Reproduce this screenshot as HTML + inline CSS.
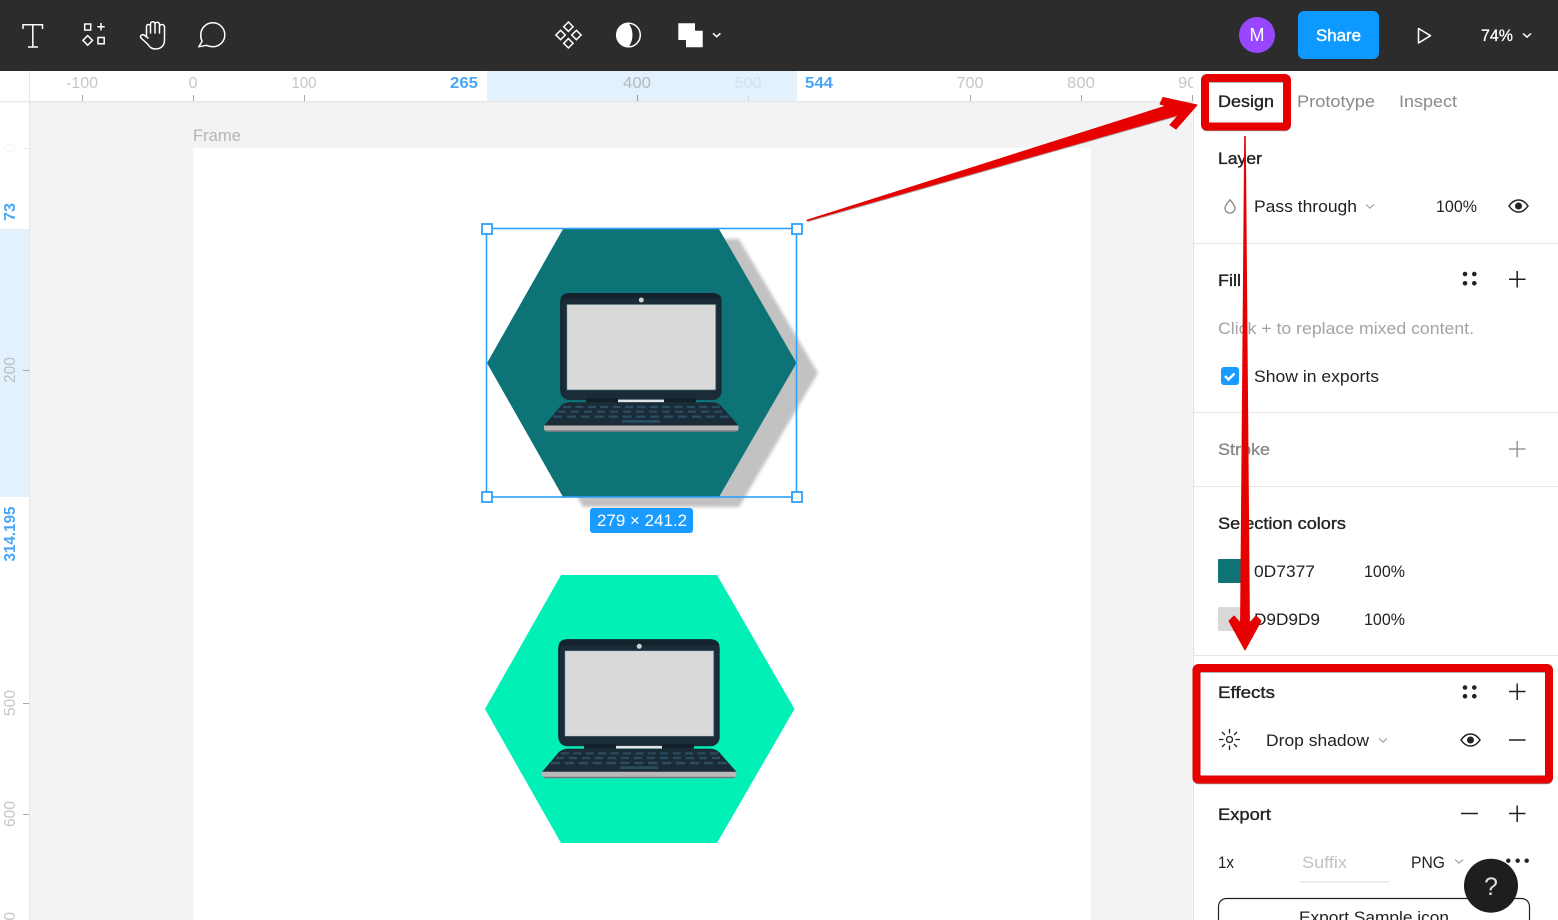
<!DOCTYPE html>
<html>
<head>
<meta charset="utf-8">
<title>Figma drop shadow</title>
<style>
html,body{margin:0;padding:0;background:#fff;width:1558px;height:920px;overflow:hidden}
svg{display:block}
text{font-family:"Liberation Sans",sans-serif;font-size:16.5px;fill:#222}
.m{stroke:#222;stroke-width:.35px}
.g{fill:#8a8a8a}
.r{font-size:15.5px;fill:#c6c6c6;text-anchor:middle}
.b{font-size:15.5px;fill:#4aa6f3;font-weight:bold;text-anchor:middle}
.w{fill:none;stroke:#fff;stroke-width:1.5}
.k{fill:none;stroke:#222;stroke-width:1.5}
</style>
</head>
<body>
<svg width="1558" height="920" viewBox="0 0 1558 920" xmlns="http://www.w3.org/2000/svg">
<defs>
<filter id="bl" x="-10%" y="-10%" width="120%" height="120%"><feGaussianBlur stdDeviation="1.6"/></filter>
<g id="lap">
<rect x="560.3" y="293" width="161.4" height="107" rx="9" fill="#1a2c38"/>
<path d="M560.3 302 Q560.3 293 569.3 293 H712 Q720 293 721.5 299 H566 Q562 299 562 303 V392 L560.3 390Z" fill="#14232d"/>
<rect x="566.8" y="304.4" width="149" height="85.6" fill="#d9d9d9" stroke="#41646f" stroke-width=".7"/>
<circle cx="641.3" cy="300" r="2.5" fill="#cfcfcf"/>
<rect x="586" y="398" width="32" height="4.5" rx="1" fill="#122029"/>
<rect x="664" y="398" width="32" height="4.5" rx="1" fill="#122029"/>
<rect x="618" y="399.6" width="46" height="2.7" fill="#e4e4e4"/>
<path d="M570 402.3 H712 Q719 402.3 723 408 L738.5 425.5 V426 H543.8 L559 408 Q563 402.3 570 402.3Z" fill="#1a2c38"/>
<line x1="563" y1="407" x2="722" y2="407" stroke="#2b4d62" stroke-width="2.2" stroke-dasharray="8 4.4"/>
<line x1="558" y1="411.7" x2="727" y2="411.7" stroke="#2b4d62" stroke-width="2.2" stroke-dasharray="8 5"/>
<line x1="553" y1="416.7" x2="732" y2="416.7" stroke="#2b4d62" stroke-width="2.4" stroke-dasharray="9 4.9"/>
<rect x="622" y="420" width="38" height="2.8" fill="#2b4d62"/>
<path d="M544 425.5 H738.5 V428 Q738.5 432 733 432 H550 Q544 432 544 428Z" fill="#b9b7b7"/>
<path d="M545 430.4 H737.5 Q736.5 432 733 432 H550 Q546.5 432 545 430.4Z" fill="#6e787d"/>
</g>
</defs>

<!-- base -->
<rect width="1558" height="920" fill="#fff"/>
<rect x="30" y="102" width="1163" height="818" fill="#f3f3f3"/>
<rect x="193" y="148" width="898" height="772" fill="#fff"/>
<rect x="29" y="71" width="1" height="849" fill="#e6e6e6"/>
<rect x="0" y="101" width="1193" height="1.3" fill="#e6e6e6"/>

<!-- rulers -->
<rect x="487" y="71" width="310" height="30" fill="#e3f1fd"/>
<rect x="0" y="229" width="29" height="268" fill="#e3f1fd"/>
<g fill="#a8a8a8">
<rect x="82" y="95" width="1" height="6"/><rect x="193" y="95" width="1" height="6"/><rect x="304" y="95" width="1" height="6"/>
<rect x="637" y="95" width="1" height="6" fill="#8d9aa6"/><rect x="748" y="95" width="1" height="6" fill="#cfdbe6"/>
<rect x="970" y="95" width="1" height="6"/><rect x="1081" y="95" width="1" height="6"/><rect x="1192" y="95" width="1" height="6"/>
<rect x="23" y="370" width="6" height="1"/><rect x="23" y="703" width="6" height="1"/><rect x="23" y="814" width="6" height="1"/>
<rect x="23" y="148" width="6" height="1" fill="#eeeeee"/>
</g>
<text class="r" x="82" y="88" textLength="32" lengthAdjust="spacingAndGlyphs">-100</text>
<text class="r" x="193" y="88" textLength="9" lengthAdjust="spacingAndGlyphs">0</text>
<text class="r" x="304" y="88" textLength="25" lengthAdjust="spacingAndGlyphs">100</text>
<text class="b" x="464" y="88" textLength="28" lengthAdjust="spacingAndGlyphs">265</text>
<text class="r" x="637" y="88" textLength="28" lengthAdjust="spacingAndGlyphs" style="fill:#aeb9c3">400</text>
<text class="r" x="748" y="88" textLength="27" lengthAdjust="spacingAndGlyphs" style="fill:#d3e2ef">500</text>
<text class="b" x="819" y="88" textLength="28" lengthAdjust="spacingAndGlyphs">544</text>
<text class="r" x="970" y="88" textLength="27" lengthAdjust="spacingAndGlyphs">700</text>
<text class="r" x="1081" y="88" textLength="28" lengthAdjust="spacingAndGlyphs">800</text>
<text class="r" x="1192" y="88" textLength="28" lengthAdjust="spacingAndGlyphs">900</text>

<text class="b" transform="translate(15,212) rotate(-90)" textLength="18" lengthAdjust="spacingAndGlyphs">73</text>
<text class="r" transform="translate(15,370) rotate(-90)" textLength="26" lengthAdjust="spacingAndGlyphs" style="fill:#b4bec8">200</text>
<text class="b" transform="translate(15,534) rotate(-90)" textLength="55" lengthAdjust="spacingAndGlyphs">314.195</text>
<text class="r" transform="translate(15,703) rotate(-90)" textLength="26" lengthAdjust="spacingAndGlyphs">500</text>
<text class="r" transform="translate(15,814) rotate(-90)" textLength="26" lengthAdjust="spacingAndGlyphs">600</text>
<text class="r" transform="translate(15,925) rotate(-90)" textLength="26" lengthAdjust="spacingAndGlyphs">700</text>
<text class="r" transform="translate(15,148) rotate(-90)" textLength="9" lengthAdjust="spacingAndGlyphs" style="fill:#f6f6f6">0</text>

<text x="193" y="141" textLength="48" lengthAdjust="spacingAndGlyphs" style="fill:#b5b5b5">Frame</text>

<!-- hexagon 1 -->
<polygon points="583,239 739,239 818,373 739,507 583,507 507,373" fill="#000" fill-opacity=".24" filter="url(#bl)"/>
<polygon points="563,229 719,229 796.5,363 719,497 563,497 487,363" fill="#0d7377"/>
<use href="#lap"/>
<rect x="486.5" y="228.5" width="310" height="268.5" fill="none" stroke="#2ea0ff" stroke-width="1.6"/>
<g fill="#fff" stroke="#2ea0ff" stroke-width="1.8">
<rect x="482" y="224" width="10" height="10"/><rect x="792" y="224" width="10" height="10"/>
<rect x="482" y="492" width="10" height="10"/><rect x="792" y="492" width="10" height="10"/>
</g>
<rect x="590" y="508" width="103" height="25" rx="3" fill="#1a9bff"/>
<text x="597" y="526" textLength="90" lengthAdjust="spacingAndGlyphs" style="fill:#fff;font-size:17px">279 × 241.2</text>

<!-- hexagon 2 -->
<polygon points="561,575 717,575 794.5,709 717,843 561,843 485,709" fill="#00f0b8"/>
<use href="#lap" transform="translate(-2,346.3)"/>

<!-- top bar -->
<rect width="1558" height="71" fill="#2c2c2c"/>
<path class="w" d="M23 29 V24.7 H42.5 V29 M32.8 24.7 V47 M28 47 H38"/>
<path class="w" d="M84.7 24 h6 v6 h-6z M101 23 v7.4 M97.3 26.7 h7.4 M87.7 35.6 l4.8 4.8 -4.8 4.8 -4.8 -4.8z M98 37.5 h6.2 v6.2 h-6.2z"/>
<path class="w" d="M146.5 36 V26.5 a2 2 0 0 1 4 0 V33 M150.5 33 V24 a2.2 2.2 0 0 1 4.5 0 V33 M155 33 V24.5 a2.2 2.2 0 0 1 4.5 0 V33 M159.5 33 V27 a2.5 2.5 0 0 1 5 0 V40 c0 6 -4 9 -9 9 c-4 0 -6 -2 -8 -5 l-6.5 -6 c-1.5 -2 1 -4 3 -3 l4 3" stroke-linecap="round" stroke-linejoin="round"/>
<path class="w" d="M200.800 35 a12 12 0 1 1 12 11.800 c-2.500 0 -4.500 -.6 -6.500 -1.500 l-7.500 1.500 l3.300 -5.500 a12 12 0 0 1 -1.300 -6.300z" stroke-linejoin="round"/>
<path class="w" d="M568.400 22 l4.700 4.700 -4.700 4.700 -4.700 -4.700z M560.600 30.300 l4.700 4.700 -4.700 4.700 -4.700 -4.700z M576.400 30.300 l4.700 4.700 -4.700 4.700 -4.700 -4.700z M568.400 38.600 l4.700 4.700 -4.700 4.700 -4.700 -4.700z"/>
<circle class="w" cx="628.500" cy="35" r="11.800"/>
<path d="M628.500 23 A12 12 0 0 0 628.500 47 A 20 20 0 0 0 628.500 23Z" fill="#fff"/>
<path d="M678.300 23.300 H695 V30.700 H702.700 V47.300 H686 V40 H678.300Z" fill="#fff"/>
<path class="w" d="M713 33.300 l3.700 3.400 3.700 -3.400"/>
<circle cx="1257" cy="35" r="18" fill="#9747ff"/>
<text x="1257" y="41" text-anchor="middle" style="fill:#fff;font-size:18px">M</text>
<rect x="1298" y="11" width="81" height="48" rx="6" fill="#0d99ff"/>
<text x="1316" y="41" textLength="45" lengthAdjust="spacingAndGlyphs" style="fill:#fff;stroke:#fff;stroke-width:.4px">Share</text>
<path class="w" d="M1418.500 28.500 V43 L1430.500 35.700Z" stroke-linejoin="round"/>
<text x="1481" y="41" textLength="32" lengthAdjust="spacingAndGlyphs" style="fill:#fff;stroke:#fff;stroke-width:.25px">74%</text>
<path class="w" d="M1523 33.500 l4 3.600 4 -3.600"/>

<!-- panel -->
<rect x="1193" y="71" width="365" height="849" fill="#fff"/>
<rect x="1193" y="102" width="1" height="818" fill="#e5e5e5"/>
<g fill="#e6e6e6">
<rect x="1194" y="243" width="364" height="1"/><rect x="1194" y="412" width="364" height="1"/>
<rect x="1194" y="486" width="364" height="1"/><rect x="1194" y="655" width="364" height="1"/>
</g>
<text class="m" x="1218" y="107" textLength="56" lengthAdjust="spacingAndGlyphs">Design</text>
<text class="g" x="1297" y="107" textLength="78" lengthAdjust="spacingAndGlyphs">Prototype</text>
<text class="g" x="1399" y="107" textLength="58" lengthAdjust="spacingAndGlyphs">Inspect</text>

<text class="m" x="1218" y="164" textLength="44" lengthAdjust="spacingAndGlyphs">Layer</text>
<path d="M1230 199.800 c2.500 3.200 5 5.500 5 8.300 a5 5 0 0 1 -10 0 c0 -2.800 2.500 -5.100 5 -8.300z" fill="none" stroke="#888" stroke-width="1.300"/>
<text x="1254" y="212" textLength="103" lengthAdjust="spacingAndGlyphs">Pass through</text>
<path d="M1366 204.500 l4 3.600 4 -3.600" fill="none" stroke="#aaa" stroke-width="1.300"/>
<text x="1436" y="212" textLength="41" lengthAdjust="spacingAndGlyphs">100%</text>
<path d="M1509 206 c3 -4.500 6 -6 9.500 -6 s6.500 1.500 9.500 6 c-3 4.500 -6 6 -9.500 6 s-6.500 -1.500 -9.500 -6z" fill="none" stroke="#222" stroke-width="1.500"/><circle cx="1518.500" cy="206" r="3.500" fill="#222"/>

<text class="m" x="1218" y="286" textLength="23" lengthAdjust="spacingAndGlyphs">Fill</text>
<g fill="#222"><circle cx="1465" cy="274" r="2.300"/><circle cx="1474.300" cy="274" r="2.300"/><circle cx="1465" cy="283.300" r="2.300"/><circle cx="1474.300" cy="283.300" r="2.300"/></g>
<path class="k" d="M1509 279.300 h16.500 M1517.200 271 v16.500"/>
<text x="1218" y="334" textLength="256" lengthAdjust="spacingAndGlyphs" style="fill:#a3a3a3">Click + to replace mixed content.</text>
<rect x="1221" y="367" width="18" height="18" rx="3" fill="#1a9bff"/>
<path d="M1225 376 l3.500 3.500 6 -6" fill="none" stroke="#fff" stroke-width="2.400"/>
<text x="1254" y="382" textLength="125" lengthAdjust="spacingAndGlyphs">Show in exports</text>

<text class="g" x="1218" y="455" textLength="52" lengthAdjust="spacingAndGlyphs" style="stroke:#8a8a8a;stroke-width:.35px">Stroke</text>
<path d="M1509 449 h16.500 M1517.200 441 v16.500" fill="none" stroke="#999" stroke-width="1.500"/>

<text class="m" x="1218" y="529" textLength="128" lengthAdjust="spacingAndGlyphs">Selection colors</text>
<rect x="1218" y="559" width="25" height="24" rx="1" fill="#0d7377"/>
<text x="1254" y="577" textLength="61" lengthAdjust="spacingAndGlyphs">0D7377</text>
<text x="1364" y="577" textLength="41" lengthAdjust="spacingAndGlyphs">100%</text>
<rect x="1218" y="607" width="25" height="24" rx="1" fill="#d9d9d9"/>
<text x="1254" y="625" textLength="66" lengthAdjust="spacingAndGlyphs">D9D9D9</text>
<text x="1364" y="625" textLength="41" lengthAdjust="spacingAndGlyphs">100%</text>

<text class="m" x="1218" y="698" textLength="57" lengthAdjust="spacingAndGlyphs">Effects</text>
<g fill="#222"><circle cx="1465" cy="687.500" r="2.300"/><circle cx="1474.300" cy="687.500" r="2.300"/><circle cx="1465" cy="696.200" r="2.300"/><circle cx="1474.300" cy="696.200" r="2.300"/></g>
<path class="k" d="M1509 691.500 h16.500 M1517.200 683.500 v16.500"/>
<circle cx="1229.500" cy="739.500" r="3" fill="none" stroke="#222" stroke-width="1.300"/>
<path d="M1229.500 729 v4.500 M1229.500 745.500 v4.500 M1219 739.500 h4.500 M1235.500 739.500 h4.500 M1222 732 l3 3 M1234 744 l3 3 M1237 732 l-3 3 M1225 744 l-3 3" fill="none" stroke="#222" stroke-width="1.300"/>
<text x="1266" y="746" textLength="103" lengthAdjust="spacingAndGlyphs">Drop shadow</text>
<path d="M1379 738.500 l4 3.600 4 -3.600" fill="none" stroke="#aaa" stroke-width="1.300"/>
<path d="M1461 740 c3 -4.500 6 -6 9.500 -6 s6.500 1.500 9.500 6 c-3 4.500 -6 6 -9.500 6 s-6.500 -1.500 -9.500 -6z" fill="none" stroke="#222" stroke-width="1.500"/><circle cx="1470.500" cy="740" r="3.500" fill="#222"/>
<path class="k" d="M1509 740 h16.500"/>

<text class="m" x="1218" y="820" textLength="53" lengthAdjust="spacingAndGlyphs">Export</text>
<path class="k" d="M1461 813.500 h17 M1509 813.500 h16.500 M1517.200 805.500 v16.500"/>
<text x="1218" y="868" textLength="16" lengthAdjust="spacingAndGlyphs">1x</text>
<text x="1302" y="868" textLength="45" lengthAdjust="spacingAndGlyphs" style="fill:#c2c2c2">Suffix</text>
<rect x="1300" y="881" width="89" height="1.500" fill="#e6e6e6"/>
<text x="1411" y="868" textLength="34" lengthAdjust="spacingAndGlyphs">PNG</text>
<path d="M1455 859.500 l4 3.600 4 -3.600" fill="none" stroke="#aaa" stroke-width="1.300"/>
<g fill="#222"><circle cx="1508.300" cy="860.700" r="2.200"/><circle cx="1517.700" cy="860.700" r="2.200"/><circle cx="1526.700" cy="860.700" r="2.200"/></g>
<rect x="1218.500" y="898.500" width="311" height="40" rx="8" fill="#fff" stroke="#222" stroke-width="1.200"/>
<text x="1299" y="923" textLength="150" lengthAdjust="spacingAndGlyphs">Export Sample icon</text>
<circle cx="1491" cy="885.700" r="27" fill="#1e1e1e"/>
<text x="1491" y="895" text-anchor="middle" style="fill:#ddd;font-size:25px">?</text>

<!-- red annotations -->
<g fill="none" stroke="#5a5a5a" stroke-opacity=".6" stroke-width="8">
<rect x="1205" y="78.700" width="82" height="48.500" rx="2"/>
<rect x="1196.500" y="668.700" width="352.500" height="111.500" rx="2"/>
</g>
<g fill="none" stroke="#e60000" stroke-width="8">
<rect x="1205" y="78" width="82" height="48.500" rx="2"/>
<rect x="1196.500" y="668" width="352.500" height="111.500" rx="2"/>
</g>
<polygon points="806,220 1180,101 1183,114 808,221" fill="#a8a8a8" transform="translate(0,1)"/>
<polygon points="806,220 1180,101 1183,114 808,221" fill="#e60000"/>
<polygon points="1163,97.500 1197,105 1176,129 1170,125 1182,111 1160,104" fill="#e60000" stroke="#e60000" stroke-width="1" stroke-linejoin="round"/>
<polygon points="1244.200,136 1245.800,136 1250,632 1240,632" fill="#e60000"/>
<polygon points="1229,621 1234,616 1245,628 1256,616 1261,621 1245,650" fill="#e60000" stroke="#e60000" stroke-width="1" stroke-linejoin="round"/>
</svg>
</body>
</html>
